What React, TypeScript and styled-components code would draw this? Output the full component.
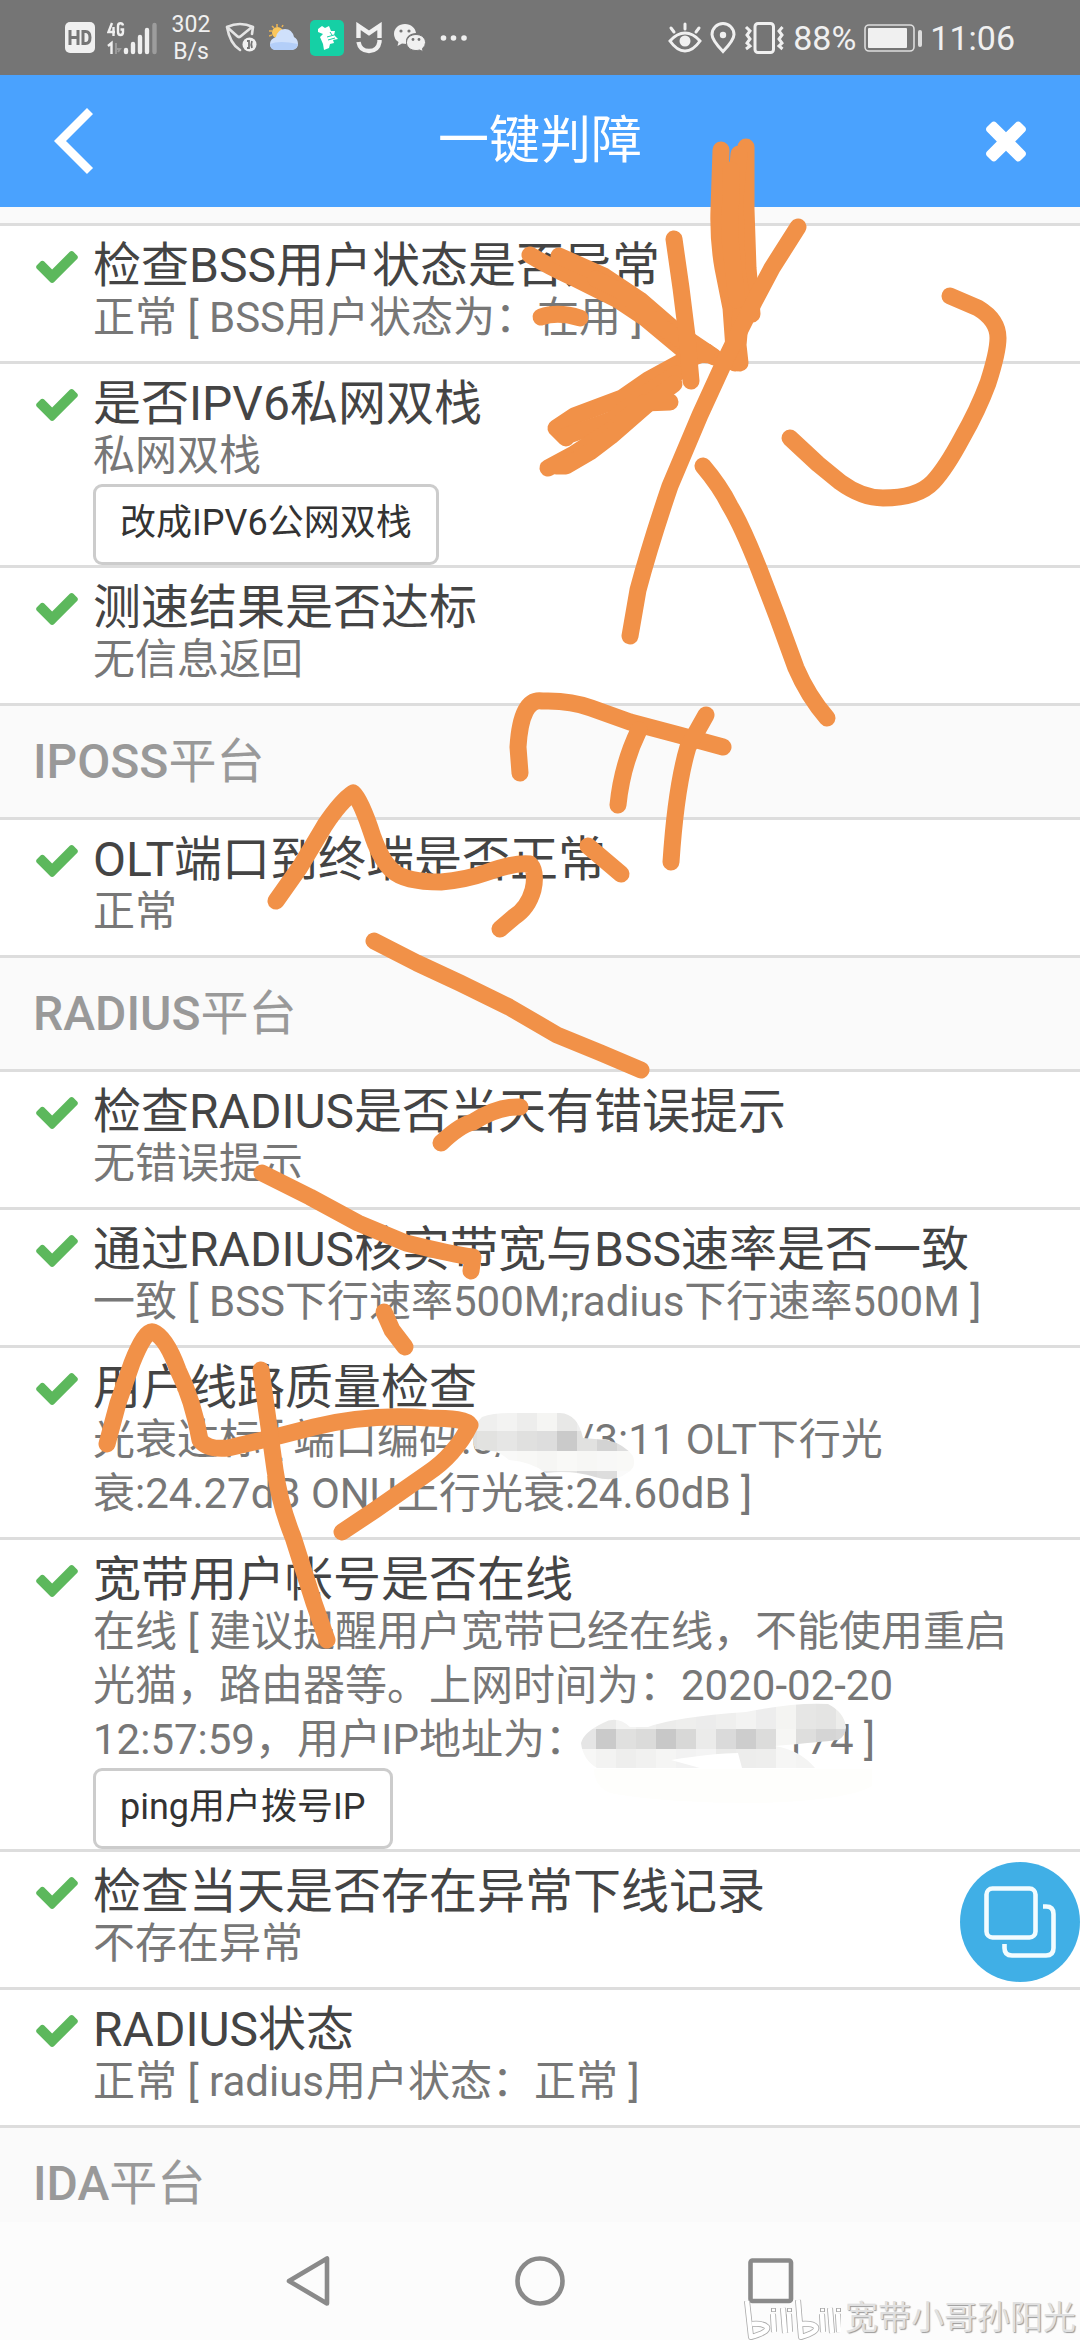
import React from "react";
import styled, { createGlobalStyle } from "styled-components";

const GlobalStyle = createGlobalStyle`
  * { box-sizing: border-box; }
  body {
    margin: 0;
    background: #fcfcfc;
    font-family: Roboto, "Noto Sans CJK SC", sans-serif;
  }
  button { font-family: inherit; cursor: pointer; }
  svg { display: block; flex: none; }
`;

const Page = styled.div`
  position: relative;
  display: flex;
  flex-direction: column;
  height: 100vh;
  overflow: hidden;
`;

const StatusBar = styled.div`
  display: flex;
  flex: none;
  justify-content: space-between;
  align-items: center;
  height: 75px;
  padding: 0 65px;
  background: #757575;
  color: #f0f0f0;
`;

const StatusGroup = styled.div<{ $gap: number }>`
  display: flex;
  align-items: center;
  gap: ${(p) => p.$gap}px;
`;

const NetSpeed = styled.div`
  width: 44px;
  font-size: 23px;
  line-height: 27px;
  text-align: center;
`;

const StatusText = styled.span`
  font-size: 34px;
  line-height: 40px;
`;

const Header = styled.header`
  display: flex;
  flex: none;
  align-items: center;
  justify-content: space-between;
  height: 132px;
  padding: 0 50px;
  background: #4aa2fe;
  color: #fff;
`;

const HeaderTitle = styled.h1`
  margin: 0;
  font-size: 51px;
  line-height: 60px;
  font-weight: 400;
`;

const HeaderButton = styled.button`
  display: flex;
  align-items: center;
  justify-content: center;
  width: 48px;
  height: 72px;
  padding: 0;
  border: 0;
  background: none;
  color: #fff;
`;

const List = styled.main`
  flex: 1;
  min-height: 0;
  overflow: hidden;
  padding-top: 16px;
  background: #fafafa;
`;

const SectionTitle = styled.h2`
  margin: 0;
  padding: 26px 33px 25px;
  border-top: 3px solid #dddddd;
  background: #fafafa;
  color: #999999;
  font-size: 48px;
  line-height: 60px;
  font-weight: 400;
`;

const Strong = styled.span`
  font-weight: 500;
`;

const Row = styled.section<{ $flush: boolean }>`
  display: flex;
  align-items: flex-start;
  gap: 15px;
  padding: 15px 48px ${(p) => (p.$flush ? 0 : 15)}px 36px;
  border-top: 3px solid #dddddd;
  background: #fff;
`;

const CheckMark = styled.svg`
  width: 42px;
  height: 32px;
  margin-top: 10px;
`;

const RowBody = styled.div`
  display: flex;
  flex: 1;
  flex-direction: column;
  align-items: flex-start;
  min-width: 0;
`;

const RowTitle = styled.h3`
  margin: 0;
  color: #444444;
  font-size: 48px;
  line-height: 50px;
  font-weight: 400;
`;

const RowDetail = styled.p`
  margin: 0;
  padding-bottom: 1px;
  color: #777777;
  font-size: 42px;
  line-height: 54px;
`;

const Redacted = styled.span<{ $width: number }>`
  display: inline-block;
  width: ${(p) => p.$width}px;
`;

const ActionButton = styled.button`
  height: 81px;
  padding: 0 24px 3px;
  border: 3px solid #cccccc;
  border-radius: 9px;
  background: #fff;
  color: #333333;
  font-size: 36px;
  line-height: 54px;
`;

const NavBar = styled.nav`
  display: flex;
  flex: none;
  align-items: center;
  justify-content: center;
  gap: 171px;
  height: 118px;
  background: #fcfcfc;
`;

const NavButton = styled.button`
  display: flex;
  align-items: center;
  justify-content: center;
  width: 60px;
  height: 60px;
  padding: 0;
  border: 0;
  background: none;
`;

const FloatingButton = styled.button`
  position: absolute;
  top: 1862px;
  right: 0;
  width: 120px;
  height: 120px;
  padding: 0;
  border: 0;
  border-radius: 50%;
  background: #40afe6;
`;

const Ink = styled.svg`
  position: absolute;
  top: 0;
  left: 0;
  width: 100%;
  pointer-events: none;
`;

const Watermark = styled.div`
  position: absolute;
  right: 4px;
  bottom: 0;
  display: flex;
  align-items: center;
  gap: 4px;
  color: #e0e0e0;
  font-size: 33px;
  line-height: 42px;
  text-shadow: 1px 1px 1px #999999;
  pointer-events: none;
`;

type RowItem = { title: string; detail: React.ReactNode; action?: string };
type Group = { latin?: string; rows: RowItem[] };

const groups: Group[] = [
  {
    rows: [
      { title: "检查BSS用户状态是否异常", detail: "正常 [ BSS用户状态为：在用 ]" },
      { title: "是否IPV6私网双栈", detail: "私网双栈", action: "改成IPV6公网双栈" },
      { title: "测速结果是否达标", detail: "无信息返回" },
    ],
  },
  { latin: "IPOSS", rows: [{ title: "OLT端口到终端是否正常", detail: "正常" }] },
  {
    latin: "RADIUS",
    rows: [
      { title: "检查RADIUS是否当天有错误提示", detail: "无错误提示" },
      {
        title: "通过RADIUS核实带宽与BSS速率是否一致",
        detail: "一致 [ BSS下行速率500M;radius下行速率500M ]",
      },
      {
        title: "用户线路质量检查",
        detail: (
          <>
            光衰达标 [ 端口编码:0/
            <Redacted $width={65} />
            /3:11 OLT下行光衰:24.27dB ONU上行光衰:24.60dB ]
          </>
        ),
      },
      {
        title: "宽带用户帐号是否在线",
        detail: (
          <>
            在线 [ 建议提醒用户宽带已经在线，不能使用重启光猫，路由器等。上网时间为：2020-02-20
            12:57:59，用户IP地址为：
            <Redacted $width={196} />
            174 ]
          </>
        ),
        action: "ping用户拨号IP",
      },
      { title: "检查当天是否存在异常下线记录", detail: "不存在异常" },
      { title: "RADIUS状态", detail: "正常 [ radius用户状态：正常 ]" },
    ],
  },
  { latin: "IDA", rows: [] },
];

const strokes = [
  "M541 317Q558 311 580 318",
  "M530 255Q548 266 574 278L618 300L645 318L687 353L711 355",
  "M559 256L604 276L640 300L677 332L714 357",
  "M596 279L622 292L660 326L690 346",
  "M707 352L681 362L648 380L622 398L574 416L556 428L566 438",
  "M566 436L611 420L648 392L676 374",
  "M548 468L574 454L611 430L644 403L670 402",
  "M556 466L566 466L590 452L611 436L650 402L674 384",
  "M721 150L719 209Q718 240 723 268L731 308L735 363",
  "M746 147L746 209L748 268L752 314",
  "M739 154L735 200L737 268L742 300L738 345L740 363",
  "M731 170L730 240L737 300",
  "M674 239L681 288L687 336L691 381",
  "M798 227L772 268L755 300L737 336L722 367L700 415L670 486C655 530 646 560 638 590L630 636",
  "M703 466Q720 486 730 506Q742 526 759 569L777 616L796 668Q808 696 827 718",
  "M950 296L978 308Q998 320 998 338Q998 352 988 383Q978 410 962 438Q946 468 933 482Q918 498 883 498Q862 498 840 482L818 464L790 438",
  "M520 773L518 747Q521 698 542 701Q570 700 591 708L630 722L679 735L723 747",
  "M639 730Q622 765 618 805",
  "M706 715L688 747Q676 787 671 862",
  "M276 901L300 867L325 825Q341 801 353 793Q361 800 373 837Q382 862 393 871Q405 882 441 882Q465 880 485 873Q515 862 530 864Q537 872 533 890Q528 908 514 917L500 929",
  "M588 846L621 874",
  "M374 941L417 963L460 983L509 1007L557 1035L601 1053L641 1070",
  "M441 1143Q460 1125 473 1122Q498 1106 520 1107",
  "M262 1173L310 1197L358 1223L406 1243Q455 1255 473 1257L471 1271",
  "M384 1312L392 1330L405 1347",
  "M107 1444L118 1403L132 1363Q145 1330 153 1332Q166 1337 178 1370Q193 1400 200 1440Q207 1450 228 1448L271 1438L314 1427Q370 1413 428 1418Q466 1418 470 1425Q455 1455 428 1473L375 1510L342 1532",
  "M261 1370L268 1420L275 1470Q280 1505 293 1537L314 1603L327 1640",
];

type Cell = [number, number, number, number, string];

const run = (x: number, y: number, h: number, tones: string[]): Cell[] =>
  tones.map((t, i) => [x + i * 20, y, 20, h, t]);

const portCells: Cell[] = [
  ...run(457, 1413, 18, ["#f0f0ee", "#efefee", "#f3f3f2", "#ededec", "#f5f5f3", "#e8e8e7", "#eeeeee"]),
  ...run(457, 1431, 20, ["#dededc", "#e2e2e0", "#e6e6e5", "#e0e0df", "#dddddd", "#cacaca", "#e1e1e0", "#d3d3d3", "#dedede"]),
  ...run(457, 1451, 20, ["#e5e5e5", "#f3f3f3", "#f9f9f8", "#f8f8f6", "#f6f6f4", "#f9f9f7", "#f7f7f5", "#f8f8f7", "#f9f9f7"]),
  ...run(537, 1471, 12, ["#e2e2e2", "#e4e4e3", "#dadada", "#dddddd", "#fafafa"]),
];

const addressCells: Cell[] = [
  ...run(576, 1700, 29, ["#eeeeee", "#eaeae9", "#f4f4f3", "#f0f0ef", "#ececeb", "#eeeeed", "#ececec", "#efefee", "#f3f3f2", "#ededed", "#f4f4f2", "#e6e6e5", "#e4e4e3", "#ededeb"]),
  ...run(576, 1729, 20, ["#e5e5e5", "#cacaca", "#e0e0df", "#dbdbda", "#c8c8c8", "#d8d8d7", "#ebebea", "#dadada", "#cdcdcd", "#dcdcdb", "#f6f6f4", "#dededd", "#d5d5d5", "#d8d8d8"]),
  ...run(576, 1749, 20, ["#f7f7f6", "#f3f3f2", "#eeeeed", "#f1f1f0", "#f5f5f4", "#f2f2f2", "#f4f4f4", "#ebebea", "#ededec", "#eeeeed", "#f6f6f5", "#f4f4f3", "#f8f8f7", "#fafafa"]),
];

function Cells({ cells, clip }: { cells: Cell[]; clip: string }) {
  return (
    <g clipPath={`url(#${clip})`}>
      {cells.map(([x, y, w, h, fill]) => (
        <rect key={`${x}-${y}`} x={x} y={y} width={w} height={h} fill={fill} />
      ))}
    </g>
  );
}

function InkLayer() {
  return (
    <Ink viewBox="0 0 1080 2340" aria-hidden="true">
      <defs>
        <clipPath id="port">
          <path d="M475 1449Q468 1430 482 1417Q492 1413 510 1413H560Q578 1414 583 1438L607 1440Q624 1444 633 1456Q637 1468 627 1473Q614 1483 595 1477Q572 1470 546 1473Q532 1462 509 1460Q500 1452 492 1451Z" />
        </clipPath>
        <clipPath id="address">
          <path d="M581 1743Q584 1732 603 1723Q617 1715 630 1727H648Q675 1717 746 1712Q795 1702 828 1704Q844 1712 846 1727Q846 1736 838 1740Q820 1742 775 1746Q800 1750 815 1768H742L738 1753Q715 1753 671 1760L700 1768H597Q583 1760 581 1743Z" />
        </clipPath>
      </defs>
      <path d="M594 1769H872V1786Q850 1800 760 1803Q660 1803 610 1793Q594 1786 594 1769Z" fill="#fefefc" />
      <Cells cells={portCells} clip="port" />
      <Cells cells={addressCells} clip="address" />
      <g fill="none" stroke="#f19148" strokeWidth="17" strokeLinecap="round" strokeLinejoin="round">
        {strokes.map((d) => (
          <path key={d} d={d} />
        ))}
      </g>
    </Ink>
  );
}

function StatusIcons() {
  return (
    <StatusGroup $gap={12}>
      <svg width="30" height="31" viewBox="0 0 30 31">
        <rect width="30" height="31" rx="5" fill="#f0f0f0" />
        <path d="M5 8V23M13 8V23M5 15.500H13M18 9.500H20.500Q25 9.500 25 15.500T20.500 21.500H18Z" fill="none" stroke="#757575" strokeWidth="3" />
      </svg>
      <svg width="50" height="34" viewBox="0 0 50 34">
        <g fill="none" stroke="#f0f0f0" strokeWidth="2.400">
          <path d="M5 2L1.500 11H8M6.500 6V15M16 4.500Q15.500 2.200 13.500 2.200Q11 2.200 11 5V11Q11 14 13.500 14Q16 14 16 11V8.500H13.500" />
          <path d="M1 25L4.500 22V33" />
        </g>
        <path d="M9 22V33M9 28H13L11 31" fill="none" stroke="#9a9a9a" strokeWidth="2" />
        <g strokeWidth="4.400" strokeLinecap="round" stroke="#f0f0f0">
          <path d="M19 29V31M26 23V31M33 16V31M40 9V31" />
          <path d="M47.500 4V31" stroke="#9d9d9d" />
        </g>
      </svg>
      <NetSpeed>302 B/s</NetSpeed>
      <svg width="32" height="31" viewBox="0 0 32 31">
        <g fill="none" stroke="#e4e4e4" strokeWidth="2.600" strokeLinejoin="round" strokeLinecap="round">
          <path d="M15 28Q5 22 2 5Q15 -1 28 5L27 12M2 5L12 14Q14 16 16 14L27 5" />
        </g>
        <circle cx="24.500" cy="22.500" r="7" fill="#f0f0f0" />
        <path d="M22 19H24V26H22M27 19Q25.500 22.500 27 26" fill="none" stroke="#757575" strokeWidth="1.800" />
      </svg>
      <svg width="29" height="27" viewBox="0 0 29 27">
        <g stroke="#e8b254" strokeWidth="1.600">
          <path d="M8 0V3M3 2L5 4M0 7H3M14 1L13 3M0 12L3 11" />
        </g>
        <circle cx="8.500" cy="8.500" r="5.500" fill="#fbc75c" />
        <path d="M6 26Q1 25 1 20T7 13Q9 5 16 5T25 13Q29 15 29 20T23 26Z" fill="#cfe0fb" />
        <path d="M6 26Q1 25 1 20Q10 16 29 20Q28 25 23 26Z" fill="#b3cef8" />
      </svg>
      <svg width="34" height="36" viewBox="0 0 34 36">
        <rect width="34" height="36" rx="5" fill="#15d0a5" />
        <path d="M8 9L12 6L15 8L19 6L21 11L25 11L24 15L28 19L23 20L24 23L20 24L19 28L14 30L13 24L10 17L13 14L8 12Z" fill="#fff" />
        <path d="M20 12L22 15M17 17L24 15M18 20L25 18" stroke="#15d0a5" strokeWidth="1" />
      </svg>
      <svg width="26" height="32" viewBox="0 0 26 32">
        <path d="M2.500 16V4L13 11L23.500 4V16" fill="none" stroke="#f0f0f0" strokeWidth="4.400" />
        <path d="M2.500 20Q4 29 13 29T23.500 20V18" fill="none" stroke="#f0f0f0" strokeWidth="4.400" />
      </svg>
      <svg width="32" height="28" viewBox="0 0 32 28">
        <path d="M11 0C17 0 21.500 4 22 9C16 9 12 13 12 17Q12 18.500 12.500 20L8 19.500L3.500 22L4.500 18Q0 15 0 10C0 4 5 0 11 0Z" fill="#f0f0f0" />
        <path d="M22 10.500C27.500 10.500 31.500 14 31.500 18.500Q31.500 22 28.500 24.500L29 27.500L25.500 26Q24 26.500 22 26.500C16.500 26.500 12.500 23 12.500 18.500S16.500 10.500 22 10.500Z" fill="#f0f0f0" stroke="#757575" strokeWidth="1" />
        <g fill="#757575">
          <circle cx="7" cy="7" r="1.600" />
          <circle cx="15" cy="7" r="1.600" />
          <circle cx="19" cy="15.500" r="1.400" />
          <circle cx="25" cy="15.500" r="1.400" />
        </g>
      </svg>
      <svg width="30" height="6" viewBox="0 0 30 6" fill="#f0f0f0">
        <circle cx="5.500" cy="3" r="2.800" />
        <circle cx="15.500" cy="3" r="2.800" />
        <circle cx="26" cy="3" r="2.800" />
      </svg>
    </StatusGroup>
  );
}

function StatusInfo() {
  return (
    <StatusGroup $gap={8}>
      <svg width="34" height="31" viewBox="0 0 34 31" fill="none" stroke="#f0f0f0" strokeWidth="3" strokeLinecap="round">
        <path d="M2 19Q9 11 17 11T32 19Q25 29 17 29T2 19Z" />
        <path d="M17 2V7M3 6L6 10M31 6L28 10" />
        <circle cx="17" cy="19" r="5.500" fill="#f0f0f0" stroke="none" />
      </svg>
      <svg width="26" height="32" viewBox="0 0 26 32" fill="none" stroke="#f0f0f0" strokeWidth="3">
        <path d="M13 29.500Q2 18 2 12.500A11 11 0 0 1 24 12.500Q24 18 13 29.500Z" />
        <circle cx="13" cy="13" r="3.200" fill="#f0f0f0" stroke="none" />
      </svg>
      <svg width="41" height="32" viewBox="0 0 41 32" fill="none" stroke="#f0f0f0" strokeWidth="3">
        <rect x="11" y="1.500" width="18.500" height="29" rx="3" />
        <path d="M2 5L6 9L3 13L6 17L3 21L6 24L2 27M38.500 5L35 9L38 13L35 17L38 21L35 24L38.500 27" />
      </svg>
      <StatusText>88%</StatusText>
      <svg width="58" height="28" viewBox="0 0 58 28">
        <rect x="1" y="1" width="49" height="26" rx="4" fill="none" stroke="#dddddd" strokeWidth="1.600" />
        <rect x="4" y="4" width="39" height="20" rx="1" fill="#f0f0f0" />
        <rect x="54" y="6" width="4" height="17" rx="2" fill="#dddddd" />
      </svg>
      <StatusText>11:06</StatusText>
    </StatusGroup>
  );
}

function BilibiliLogo() {
  const letters =
    "M4 5L8 41Q26 36 24 31Q20 27 9 28M30 18L31 36M40 12L42 37M46 18L47 36M55 4L58 41Q75 36 73 31Q70 27 58 28M79 18L80 36M87 12L89 37M95 18L96 36";
  return (
    <svg width="98" height="44" viewBox="0 0 98 44" fill="none" strokeLinejoin="round">
      <path d={letters} stroke="#aaaaaa" strokeWidth="6" />
      <path d={letters} stroke="#ffffff" strokeWidth="4.400" />
      <path d="M28 14H33M44 14H49M77 14H82M93 14H98" stroke="#aaaaaa" strokeWidth="4" />
      <path d="M29 14H32M45 14H48M78 14H81M94 14H97" stroke="#ffffff" strokeWidth="2.600" />
    </svg>
  );
}

function Check() {
  return (
    <CheckMark viewBox="121 334 1550 1188" aria-hidden="true">
      <path
        fill="#5cb85c"
        d="M1671 566q0 40-28 68l-724 724-136 136q-28 28-68 28t-68-28l-136-136-362-362q-28-28-28-68t28-68l136-136q28-28 68-28t68 28l294 295 656-657q28-28 68-28t68 28l136 136q28 28 28 68z"
      />
    </CheckMark>
  );
}

export default function App() {
  return (
    <>
      <GlobalStyle />
      <Page>
        <StatusBar>
          <StatusIcons />
          <StatusInfo />
        </StatusBar>
        <Header>
          <HeaderButton aria-label="返回">
            <svg width="40" height="66" viewBox="0 0 40 66">
              <path d="M36 3L6 33L36 63" fill="none" stroke="#fff" strokeWidth="8.500" />
            </svg>
          </HeaderButton>
          <HeaderTitle>一键判障</HeaderTitle>
          <HeaderButton aria-label="关闭">
            <svg width="40" height="41" viewBox="302 366 1188 1188">
              <path
                fill="#fff"
                d="M1490 1322q0 40-28 68l-136 136q-28 28-68 28t-68-28l-294-294-294 294q-28 28-68 28t-68-28l-136-136q-28-28-28-68t28-68l294-294-294-294q-28-28-28-68t28-68l136-136q28-28 68-28t68 28l294 294 294-294q28-28 68-28t68 28l136 136q28 28 28 68t-28 68l-294 294 294 294q28 28 28 68z"
              />
            </svg>
          </HeaderButton>
        </Header>
        <List>
          {groups.map((group, i) => (
            <React.Fragment key={i}>
              {group.latin && (
                <SectionTitle>
                  <Strong>{group.latin}</Strong>平台
                </SectionTitle>
              )}
              {group.rows.map((row) => (
                <Row key={row.title} $flush={!!row.action}>
                  <Check />
                  <RowBody>
                    <RowTitle>{row.title}</RowTitle>
                    <RowDetail>{row.detail}</RowDetail>
                    {row.action && <ActionButton>{row.action}</ActionButton>}
                  </RowBody>
                </Row>
              ))}
            </React.Fragment>
          ))}
        </List>
        <NavBar>
          <NavButton aria-label="返回上一页">
            <svg width="50" height="50" viewBox="0 0 50 50" fill="none" stroke="#8a8a8a" strokeWidth="4.600" strokeLinejoin="round">
              <path d="M43 2.500V47.500L5 25Z" />
            </svg>
          </NavButton>
          <NavButton aria-label="主屏幕">
            <svg width="50" height="50" viewBox="0 0 50 50" fill="none" stroke="#8a8a8a" strokeWidth="4.600">
              <circle cx="25" cy="25" r="22.500" />
            </svg>
          </NavButton>
          <NavButton aria-label="最近任务">
            <svg width="46" height="46" viewBox="0 0 46 46" fill="none" stroke="#8a8a8a" strokeWidth="4.600">
              <rect x="2.500" y="2.500" width="40.500" height="40.500" rx="2" />
            </svg>
          </NavButton>
        </NavBar>
        <FloatingButton aria-label="复制">
          <svg width="120" height="120" viewBox="0 0 120 120" fill="none" stroke="#f2fcff" strokeWidth="4.600">
            <rect x="26.500" y="26.500" width="49" height="49" rx="6" />
            <path d="M83 44.500H86Q93.500 44.500 93.500 52V86Q93.500 93.500 86 93.500H52Q44.500 93.500 44.500 86V82" />
          </svg>
        </FloatingButton>
        <InkLayer />
        <Watermark>
          <BilibiliLogo />
          宽带小哥孙阳光
        </Watermark>
      </Page>
    </>
  );
}
